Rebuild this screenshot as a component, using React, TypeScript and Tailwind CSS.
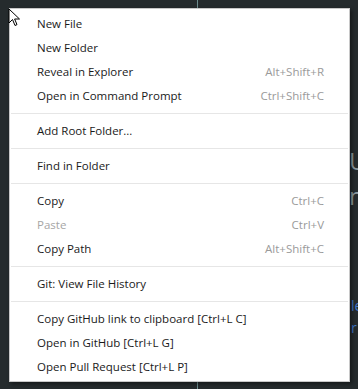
import type { ReactNode } from 'react';

type Item =
  | { kind: 'item'; label: string; shortcut?: string; disabled?: boolean }
  | { kind: 'sep' };

const items: Item[] = [
  { kind: 'item', label: 'New File' },
  { kind: 'item', label: 'New Folder' },
  { kind: 'item', label: 'Reveal in Explorer', shortcut: 'Alt+Shift+R' },
  { kind: 'item', label: 'Open in Command Prompt', shortcut: 'Ctrl+Shift+C' },
  { kind: 'sep' },
  { kind: 'item', label: 'Add Root Folder...' },
  { kind: 'sep' },
  { kind: 'item', label: 'Find in Folder' },
  { kind: 'sep' },
  { kind: 'item', label: 'Copy', shortcut: 'Ctrl+C' },
  { kind: 'item', label: 'Paste', shortcut: 'Ctrl+V', disabled: true },
  { kind: 'item', label: 'Copy Path', shortcut: 'Alt+Shift+C' },
  { kind: 'sep' },
  { kind: 'item', label: 'Git: View File History' },
  { kind: 'sep' },
  { kind: 'item', label: 'Copy GitHub link to clipboard [Ctrl+L C]' },
  { kind: 'item', label: 'Open in GitHub [Ctrl+L G]' },
  { kind: 'item', label: 'Open Pull Request [Ctrl+L P]' },
];

function Row({ children, shortcut, disabled }: { children: ReactNode; shortcut?: string; disabled?: boolean }) {
  return (
    <div className="flex h-6 items-center justify-between pl-[27px] pr-[25px]">
      <span className={disabled ? 'text-[#a6a6a6]' : 'text-[#1a1a1a]'}>{children}</span>
      {shortcut && <span className="text-[#9a9a9a]">{shortcut}</span>}
    </div>
  );
}

function Cursor() {
  return (
    <svg width="13" height="20" viewBox="0 0 13 20" className="absolute left-[8px] top-[8px]">
      <path
        d="M1 1 L1 15 L4.5 11.5 L7 17.5 L9 16.6 L6.6 11 L11.5 11 Z"
        fill="#ffffff"
        stroke="#000000"
        strokeWidth="1"
        strokeLinejoin="miter"
      />
    </svg>
  );
}

export default function App() {
  return (
    <div
      className="relative h-[389px] w-[358px] overflow-hidden bg-[#252b2d] text-[11.5px]"
      style={{ fontFamily: '"Open Sans", "Noto Sans", sans-serif' }}
    >
      {/* editor behind the menu, mostly hidden */}
      <div className="absolute left-[197px] top-0 h-full w-px bg-[#6d8c8e]" />
      <div className="absolute left-[349px] top-[147px] flex flex-col gap-[7px] text-[24px] leading-[28px] text-[#8d9ba0]">
        <span>U</span>
        <span>n</span>
      </div>
      <div className="absolute left-[351px] top-[295px] flex flex-col text-[14px] leading-[22px] text-[#3f78cf]">
        <span>le</span>
        <span>r</span>
      </div>

      {/* context menu */}
      <div className="absolute left-[9px] top-[8px] w-[341px] border border-[#c8c8c8] bg-white pb-[2px] pt-[3px] shadow-[2px_2px_4px_rgba(0,0,0,0.45)]">
        {items.map((it, i) =>
          it.kind === 'sep' ? (
            <div key={i} className="mx-[1px] my-[5px] h-px bg-[#e6e6e6]" />
          ) : (
            <Row key={i} shortcut={it.shortcut} disabled={it.disabled}>
              {it.label}
            </Row>
          ),
        )}
      </div>

      <Cursor />
    </div>
  );
}
